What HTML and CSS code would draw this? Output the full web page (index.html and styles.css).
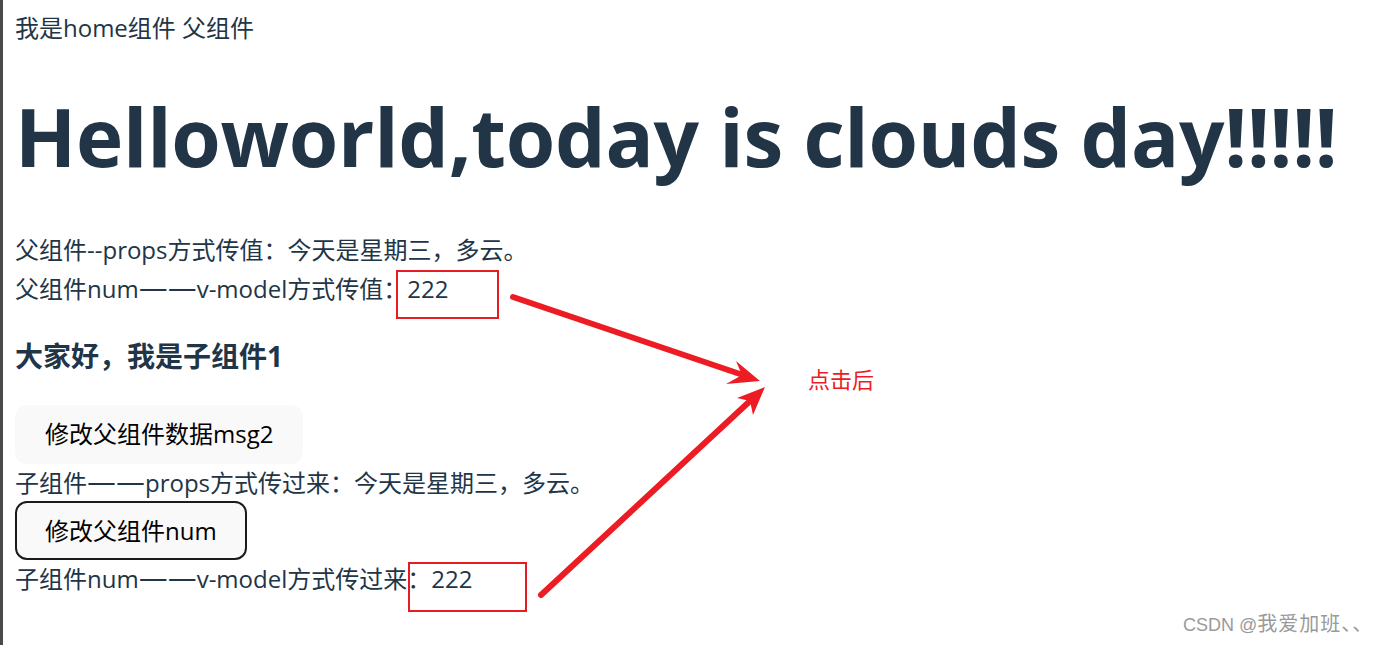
FILE: index.html
```html
<!DOCTYPE html>
<html lang="zh-CN">
<head>
<meta charset="utf-8">
<title>home</title>
<link rel="stylesheet" href="styles.css">
</head>
<body>
<div class="frame">
  <div class="home">
    <div class="line first">我是home组件 父组件</div>
    <h1 class="title">Helloworld,today is clouds day!!!!!</h1>
    <div class="line props">父组件--props方式传值：今天是星期三，多云。</div>
    <div class="line">父组件num<span class="dash">——</span>v-model方式传值：222</div>
    <h3 class="sub">大家好，我是子组件1</h3>
    <button class="btn">修改父组件数据msg2</button>
    <div class="line">子组件<span class="dash">——</span>props方式传过来：今天是星期三，多云。</div>
    <button class="btn focused">修改父组件num</button>
    <div class="line">子组件num<span class="dash">——</span>v-model方式传过来：222</div>
  </div>
</div>

<div class="mark box1"></div>
<div class="mark box2"></div>
<svg class="arrows" width="1376" height="645" viewBox="0 0 1376 645">
  <line x1="513" y1="297" x2="740" y2="374" stroke="#ed1c24" stroke-width="6" stroke-linecap="round"/>
  <polygon points="760,381 736,361 742,375 726,384" fill="#ed1c24"/>
  <line x1="541" y1="595" x2="750" y2="401" stroke="#ed1c24" stroke-width="6" stroke-linecap="round"/>
  <polygon points="765,387 737,398 750,401 753,415" fill="#ed1c24"/>
</svg>
<div class="note">点击后</div>
<div class="watermark">CSDN @<span class="wm-cjk">我爱加班、、</span></div>
</body>
</html>
```

FILE: styles.css
```css
html, body {
  margin: 0;
  padding: 0;
  background: #ffffff;
}

body {
  font-family: "Open Sans", "Noto Sans CJK SC", sans-serif;
  color: #213547;
  font-size: 24px;
  line-height: 1.6;
  width: 1376px;
  height: 645px;
  overflow: hidden;
  position: relative;
}

.frame {
  border-left: 3px solid #4a4a4a;
  height: 645px;
  box-sizing: border-box;
  padding: 9px 0 0 12px;
}

.home {
  display: flex;
  flex-direction: column;
  align-items: flex-start;
}

.line {
  white-space: nowrap;
}

.dash {
  font-family: "DejaVu Sans", sans-serif;
  font-size: 29px;
  line-height: 1;
}

.title {
  margin: 45px 0 0 0;
  font-size: 80px;
  height: 88px;
  line-height: 88px;
  font-weight: 700;
  letter-spacing: -0.25px;
  white-space: nowrap;
}

.props {
  margin-top: 51px;
}

.sub {
  margin: 26px 0 0 0;
  font-size: 28px;
  font-weight: 700;
}

.btn {
  margin-top: 26px;
  font-family: "Open Sans", "Noto Sans CJK SC", sans-serif;
  font-size: 24px;
  font-weight: 400;
  color: #000000;
  background: #f9f9f9;
  border: 2px solid transparent;
  border-radius: 12px;
  padding: 0 28px;
  height: 59px;
  line-height: 1;
}

.btn.focused {
  margin-top: -1px;
  border-color: #1a1a1a;
}

.mark {
  position: absolute;
  border: 2px solid #e51c23;
  box-sizing: border-box;
}

.box1 {
  left: 396px;
  top: 270px;
  width: 103px;
  height: 49px;
}

.box2 {
  left: 408px;
  top: 562px;
  width: 119px;
  height: 50px;
}

.arrows {
  position: absolute;
  left: 0;
  top: 0;
}

.note {
  position: absolute;
  left: 808px;
  top: 366px;
  font-size: 22px;
  line-height: 1.2;
  color: #ed1c24;
}

.watermark {
  position: absolute;
  left: 1183px;
  top: 613px;
  white-space: nowrap;
  font-family: "Liberation Sans", "Noto Sans CJK SC", sans-serif;
  font-size: 18px;
  line-height: 1.3;
  color: #9a9a9a;
  text-shadow: 0 0 2px #ffffff;
}

.wm-cjk {
  font-family: "Noto Sans CJK SC", sans-serif;
  font-size: 20px;
  line-height: 1;
  letter-spacing: 1px;
}
```
